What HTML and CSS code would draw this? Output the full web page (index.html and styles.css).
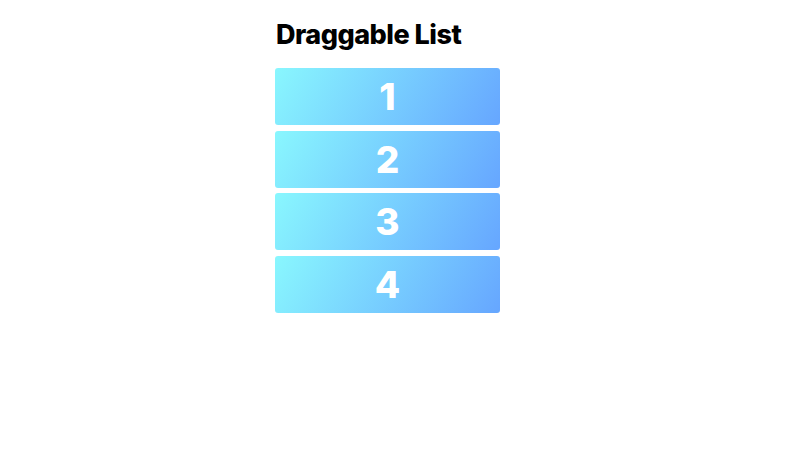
FILE: index.html
```html
<!DOCTYPE html>
<html lang="en">
<head>
    <meta charset="UTF-8">
    <meta name="viewport" content="width=device-width, initial-scale=1.0">
    <title>Draggable List</title>
    <link rel="stylesheet" href="styles.css">
</head>
<body>
    <!-- list -->
    <div class="wrapper">
        <h1 class="title">Draggable List</h1>
        <ul class="list">
            <li class="item" draggable="true">1</li>
            <li class="item" draggable="true">2</li>
            <li class="item" draggable="true">3</li>
            <li class="item" draggable="true">4</li>
        </ul>
    </div>
</body>
</html>
```

FILE: styles.css
```css
/* page styles */

body {
    font-family: Inter, 'DejaVu Sans', sans-serif;
    margin: 0;
    padding: 0;
    background-color: #fff;
}
.wrapper {
    width: 250px;
    margin: 0 auto;
    padding: 18px 0 0 0;
}
.title {
    font-size: 27px;
    font-weight: 800;
    color: #000;
    margin: 0 0 17px 1px;
    letter-spacing: -0.5px;
}
.list {
    list-style: none;
    margin: 0;
    padding: 0;
    width: 225px;
}
.item {
    height: 57px;
    margin: 0 0 5.7px 0;
    border-radius: 3px;
    background-image: linear-gradient(120deg, #89f7fe 0%, #66a6ff 100%);
    color: #fff;
    font-size: 37px;
    font-weight: 800;
    display: flex;
    align-items: center;
    justify-content: center;
    cursor: move;
}
```
